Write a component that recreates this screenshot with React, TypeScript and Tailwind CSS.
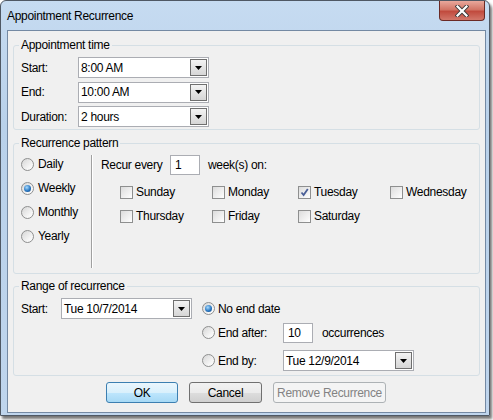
import React from 'react';

// small win7 style controls
const Arrow = () => (
  <svg width="7" height="4" viewBox="0 0 7 4">
    <path d="M0 0h7L3.5 4z" fill="#000" />
  </svg>
);

const Combo = ({ value }: { value: string }) => (
  <div className="flex h-[21px] w-[131px] items-center border border-[#abadb3] bg-white">
    <span className="flex-1 truncate pl-[2px] text-black">{value}</span>
    <span className="mr-[1px] flex h-[17px] w-[17px] items-center justify-center border border-[#6f6f6f] bg-[linear-gradient(#f4f4f4,#e4e4e4_50%,#d6d6d6)]">
      <Arrow />
    </span>
  </div>
);

const TextBox = ({ value, w }: { value: string; w: string }) => (
  <div className={`flex h-[20px] items-center border border-[#abadb3] bg-white pl-[4px] ${w}`}>{value}</div>
);

const Radio = ({ checked = false }: { checked?: boolean }) => (
  <span className="flex h-[13px] w-[13px] shrink-0 items-center justify-center rounded-full border border-[#8e8f8f] bg-[linear-gradient(135deg,#d6d6d6,#f6f6f6_70%,#ffffff)]">
    {checked && (
      <span className="h-[7px] w-[7px] rounded-full bg-[radial-gradient(circle_at_40%_35%,#a9dcff,#2a78c2_55%,#0b3d78)]" />
    )}
  </span>
);

const Checkbox = ({ checked = false }: { checked?: boolean }) => (
  <span className="flex h-[13px] w-[13px] shrink-0 items-center justify-center border border-[#8e8f8f] bg-[linear-gradient(135deg,#dcdcdc,#f4f4f4_70%,#ffffff)]">
    {checked && (
      <svg width="9" height="9" viewBox="0 0 9 9">
        <path d="M1.5 4.5 3.6 7 7.8 1" fill="none" stroke="#4a5f97" strokeWidth="1.8" />
      </svg>
    )}
  </span>
);

const Day = ({ label, checked = false, w }: { label: string; checked?: boolean; w: string }) => (
  <div className={`flex items-center gap-[3px] ${w}`}>
    <Checkbox checked={checked} />
    <span>{label}</span>
  </div>
);

const Button = ({ label, kind = 'normal' }: { label: string; kind?: 'normal' | 'default' | 'disabled' }) => {
  const look =
    kind === 'default'
      ? 'border-[#3c7fb1] bg-[linear-gradient(#eaf6fd,#d9f0fc_50%,#bee6fd_51%,#a7d9f5)] text-black'
      : kind === 'disabled'
      ? 'border-[#adb2b5] bg-[#f4f4f4] text-[#838383]'
      : 'border-[#707070] bg-[linear-gradient(#f2f2f2,#ebebeb_50%,#dddddd_51%,#cfcfcf)] text-black';
  return (
    <div className={`flex h-[21px] items-center justify-center rounded-[3px] border ${look}`}>{label}</div>
  );
};

export default function App() {
  return (
    <div className="h-[420px] w-[493px] bg-white font-['Liberation_Sans',Arial,sans-serif] text-[12px] leading-[14px] tracking-[-0.3px] text-black">
      <div className="flex h-[416px] w-[490px] flex-col rounded-t-[6px] border border-[#4f5864] bg-[linear-gradient(#c6dbf1,#b9d1ea_30%,#bfd5ed)] shadow-[2px_3px_3px_rgba(0,0,0,0.55)]">
        {/* title bar */}
        <div className="flex h-[29px] items-start justify-between">
          <span className="pl-[6px] pt-[8px] text-[12px]">Appointment Recurrence</span>
          <div className="mr-[4px] flex h-[20px] w-[46px] items-center justify-center rounded-b-[4px] border border-t-0 border-[#6b2a25] bg-[linear-gradient(#e8a89c,#d27566_45%,#c14b3e_55%,#d2776a)]">
            <svg width="14" height="12" viewBox="0 0 14 12">
              <path d="M2.5 1.5 11.5 10.5M11.5 1.5 2.5 10.5" stroke="#3a3a3a" strokeWidth="4" strokeLinecap="square" />
              <path d="M2.5 1.5 11.5 10.5M11.5 1.5 2.5 10.5" stroke="#ffffff" strokeWidth="2.2" strokeLinecap="square" />
            </svg>
          </div>
        </div>

        {/* client area */}
        <div className="ml-[6px] mr-[3px] flex h-[383px] flex-col border border-[#7489a3] bg-[#f0f0f0] px-[5px] pt-[7px]">
          {/* Appointment time */}
          <fieldset className="h-[92px] rounded-[3px] border border-[#d5dfe5] pl-[7px]">
            <legend className="-ml-[2px] px-[2px]">Appointment time</legend>
            <div className="mt-[5px] flex flex-col gap-[3.5px]">
              <div className="flex items-center">
                <span className="w-[57px]">Start:</span>
                <Combo value="8:00 AM" />
              </div>
              <div className="flex items-center">
                <span className="w-[57px]">End:</span>
                <Combo value="10:00 AM" />
              </div>
              <div className="flex items-center">
                <span className="w-[57px]">Duration:</span>
                <Combo value="2 hours" />
              </div>
            </div>
          </fieldset>

          {/* Recurrence pattern */}
          <fieldset className="mt-[6px] flex h-[138px] rounded-[3px] border border-[#d5dfe5]">
            <legend className="ml-[5px] px-[2px]">Recurrence pattern</legend>
            <div className="flex">
              <div className="flex w-[77px] flex-col gap-[10px] pl-[7px] pt-[7px]">
                <label className="flex items-center gap-[4px]"><Radio />Daily</label>
                <label className="flex items-center gap-[4px]"><Radio checked />Weekly</label>
                <label className="flex items-center gap-[4px]"><Radio />Monthly</label>
                <label className="flex items-center gap-[4px]"><Radio />Yearly</label>
              </div>
              <div className="mt-[5px] h-[113px] w-[2px] border-l border-r border-l-[#a0a0a0] border-r-white" />
              <div className="flex flex-col pl-[8px] pt-[5px]">
                <div className="flex items-center">
                  <span className="w-[69px]">Recur every</span>
                  <TextBox value="1" w="w-[30px]" />
                  <span className="ml-[8px]">week(s) on:</span>
                </div>
                <div className="mt-[10px] flex pl-[19px]">
                  <Day label="Sunday" w="w-[92px]" />
                  <Day label="Monday" w="w-[86px]" />
                  <Day label="Tuesday" checked w="w-[92px]" />
                  <Day label="Wednesday" w="w-[80px]" />
                </div>
                <div className="mt-[10px] flex pl-[19px]">
                  <Day label="Thursday" w="w-[92px]" />
                  <Day label="Friday" w="w-[86px]" />
                  <Day label="Saturday" w="w-[92px]" />
                </div>
              </div>
            </div>
          </fieldset>

          {/* Range of recurrence */}
          <fieldset className="mt-[5px] h-[97px] rounded-[3px] border border-[#d5dfe5] pl-[7px]">
            <legend className="-ml-[2px] px-[2px]">Range of recurrence</legend>
            <div className="mt-[5px] flex">
              <div className="flex h-[21px] items-center">
                <span className="w-[40px]">Start:</span>
                <Combo value="Tue 10/7/2014" />
              </div>
              <div className="ml-[10px] flex flex-col">
                <div className="flex h-[21px] items-center gap-[3px]">
                  <Radio checked />
                  <span>No end date</span>
                </div>
                <div className="mt-[3px] flex h-[21px] items-center">
                  <div className="flex w-[81px] items-center gap-[3px]">
                    <Radio />
                    <span>End after:</span>
                  </div>
                  <TextBox value="10" w="w-[30px]" />
                  <span className="ml-[9px]">occurrences</span>
                </div>
                <div className="mt-[7px] flex h-[21px] items-center">
                  <div className="flex w-[81px] items-center gap-[3px]">
                    <Radio />
                    <span>End by:</span>
                  </div>
                  <Combo value="Tue 12/9/2014" />
                </div>
              </div>
            </div>
          </fieldset>

          {/* buttons */}
          <div className="ml-[93px] mt-[6px] flex gap-[11px]">
            <div className="w-[72px]"><Button label="OK" kind="default" /></div>
            <div className="w-[73px]"><Button label="Cancel" /></div>
            <div className="w-[113px]"><Button label="Remove Recurrence" kind="disabled" /></div>
          </div>
        </div>
      </div>
    </div>
  );
}
